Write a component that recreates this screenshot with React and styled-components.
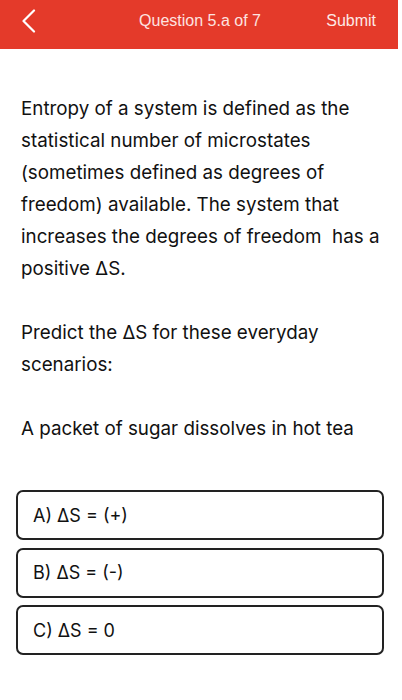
import React from "react";
import styled, { createGlobalStyle } from "styled-components";

const GlobalStyle = createGlobalStyle`
  body {
    margin: 0;
    background: #ffffff;
    font-family: Inter, "Liberation Sans", Arial, sans-serif;
  }
`;

const Page = styled.div`
  width: 402px;
  min-height: 700px;
  background: #ffffff;
`;

const Header = styled.div`
  width: 398px;
  height: 49px;
  box-sizing: border-box;
  padding-bottom: 7px;
  background-color: #e43a2a;
  display: grid;
  grid-template-columns: 80px 1fr 80px;
  align-items: center;
`;

const BackButton = styled.div`
  padding-left: 21px;
  display: flex;
  align-items: center;
`;

const Title = styled.div`
  text-align: center;
  color: #fde3e0;
  font-family: "Liberation Sans", Arial, sans-serif;
  font-size: 16px;
  padding-left: 2px;
`;

const Submit = styled.div`
  color: #fde9e6;
  font-family: "Liberation Sans", Arial, sans-serif;
  font-size: 16px;
  text-align: right;
  padding-right: 22px;
`;

const Content = styled.div`
  padding: 44px 8px 0 21px;
`;

const Paragraph = styled.p`
  margin: 0 0 32px 0;
  font-size: 18.8px;
  line-height: 32px;
  color: #111111;
`;

const Options = styled.div`
  display: flex;
  flex-direction: column;
  gap: 7.5px;
  padding: 13px 18px 0 16px;
`;

const Option = styled.div`
  box-sizing: border-box;
  height: 50px;
  border: 2px solid #222222;
  border-radius: 7px;
  display: flex;
  align-items: center;
  padding-left: 15px;
  font-size: 18px;
  color: #111111;
`;

function App() {
  return (
    <Page>
      <GlobalStyle />
      <Header>
        <BackButton>
          <svg width="15" height="24" viewBox="0 0 15 24">
            <path
              d="M13 1.5 L2.5 12 L13 22.5"
              fill="none"
              stroke="#ffffff"
              strokeWidth="2.2"
              strokeLinecap="round"
              strokeLinejoin="round"
            />
          </svg>
        </BackButton>
        <Title>Question 5.a of 7</Title>
        <Submit>Submit</Submit>
      </Header>
      <Content>
        <Paragraph>
          Entropy of a system is defined as the statistical number of
          microstates (sometimes defined as degrees of freedom) available. The
          system that increases the degrees of freedom&nbsp; has a positive ΔS.
        </Paragraph>
        <Paragraph>Predict the ΔS for these everyday scenarios:</Paragraph>
        <Paragraph>A packet of sugar dissolves in hot tea</Paragraph>
      </Content>
      <Options>
        <Option>A) ΔS = (+)</Option>
        <Option>B) ΔS = (-)</Option>
        <Option>C) ΔS = 0</Option>
      </Options>
    </Page>
  );
}

export default App;
